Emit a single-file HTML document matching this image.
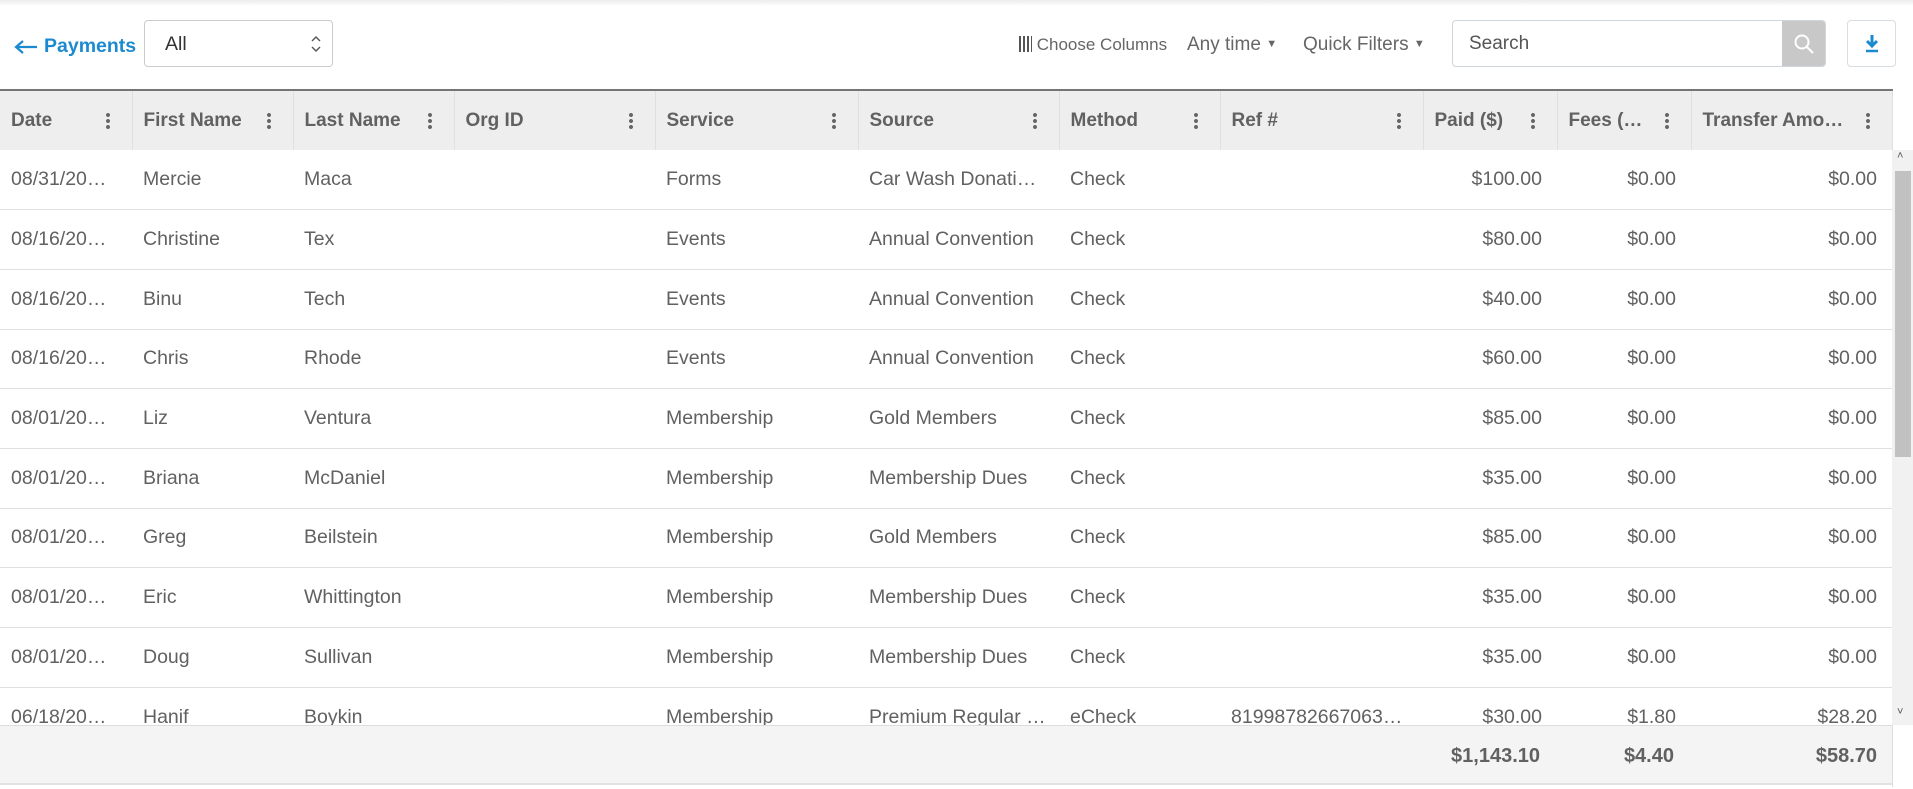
<!DOCTYPE html>
<html><head><meta charset="utf-8"><style>
*{box-sizing:border-box;margin:0;padding:0}
body{width:1913px;height:789px;overflow:hidden;background:#fff;font-family:"Liberation Sans",Arial,sans-serif;color:#616161;position:relative}
.topsh{position:absolute;left:0;top:0;width:1913px;height:6px;background:linear-gradient(#ececec,#fff)}
.abs{position:absolute}
.back{left:14px;top:35px;color:#1b8ad1;font-size:19.5px;font-weight:bold;display:flex;align-items:center;gap:6px}
.sel{left:144px;top:20px;width:189px;height:47px;border:1px solid #ccc;border-radius:4px;font-size:19.5px;color:#333;padding:12px 20px}
.tb{top:34px;font-size:19px;color:#666}
.search{left:1452px;top:20px;width:374px;height:47px;border:1px solid #cfd6de;border-radius:4px;overflow:hidden}
.search span{position:absolute;left:16px;top:12px;font-size:19px;color:#555}
.search .btn{position:absolute;right:0;top:0;width:43px;height:47px;background:#c8c8c8}
.dl{left:1847px;top:20px;width:49px;height:47px;border:1px solid #d8dde3;border-radius:4px}
table{position:absolute;left:0;top:89px;width:1892px;border-collapse:collapse;table-layout:fixed;font-size:19.5px}
thead tr{background:#eeeeee;height:60px;border-top:2px solid #757575}
th{text-align:left;font-weight:bold;color:#616161;padding:0 11px;border-right:1px solid #e0e0e0;position:relative;white-space:nowrap;font-size:19px}
th i{position:absolute;right:22px;top:21px;width:4px;height:18px;background:radial-gradient(circle,#666 1.8px,transparent 2.2px) 0 0/4px 6px repeat-y}
td{height:59.7px;border-bottom:1px solid #e0e0e0;padding:0 11px;white-space:nowrap;overflow:hidden;color:#616161}
td.r{text-align:right;padding-right:15px}
.foot{position:absolute;left:0;top:725px;width:1892px;height:60px;background:#f4f4f4;border-top:1px solid #ddd;border-bottom:2px solid #e2e2e2;font-weight:bold;font-size:20px;color:#616161}
.foot span{position:absolute;top:19px}
.sb{position:absolute;left:1892px;top:150px;width:21px;height:575px;background:#f1f1f1}
.thumb{position:absolute;left:1895px;top:171px;width:16px;height:286px;background:#c1c1c1}
</style></head><body>
<div class="topsh"></div>
<div class="abs back"><svg width="24" height="16" viewBox="0 0 24 16"><path d="M23 8H3M9 2L2 8l7 6" stroke="#1b8ad1" stroke-width="2.2" fill="none"/></svg>Payments</div>
<div class="abs sel">All<svg style="position:absolute;right:10px;top:13px" width="12" height="20" viewBox="0 0 12 20"><path d="M2 7l4-4 4 4M2 13l4 4 4-4" stroke="#555" stroke-width="1.4" fill="none"/></svg></div>
<div class="abs tb" style="left:1019px;font-size:17px;top:35px"><span style="display:inline-block;width:13px;height:16px;background:repeating-linear-gradient(90deg,#555 0 2px,transparent 2px 4px);vertical-align:-2px"></span> Choose Columns</div>
<div class="abs tb" style="left:1187px">Any time <span style="font-size:11px;vertical-align:3px">▼</span></div>
<div class="abs tb" style="left:1303px">Quick Filters <span style="font-size:11px;vertical-align:3px">▼</span></div>
<div class="abs search"><span>Search</span><div class="btn"><svg style="position:absolute;left:11px;top:12px" width="22" height="22" viewBox="0 0 22 22"><circle cx="9" cy="9" r="6.5" stroke="#fff" stroke-width="2" fill="none"/><path d="M14 14l6 6" stroke="#fff" stroke-width="2"/></svg></div></div>
<div class="abs dl"><svg style="position:absolute;left:16px;top:13px" width="16" height="20" viewBox="0 0 16 20"><path d="M8 1v10M3 7l5 5 5-5" stroke="#1b8ad1" stroke-width="3" fill="none"/><path d="M2 17h12" stroke="#1b8ad1" stroke-width="2.5"/></svg></div>
<table>
<colgroup><col style="width:132px"><col style="width:161px"><col style="width:161px"><col style="width:201px"><col style="width:203px"><col style="width:201px"><col style="width:161px"><col style="width:203px"><col style="width:134px"><col style="width:134px"><col style="width:201px"></colgroup>
<thead><tr><th>Date<i></i></th><th>First Name<i></i></th><th>Last Name<i></i></th><th>Org ID<i></i></th><th>Service<i></i></th><th>Source<i></i></th><th>Method<i></i></th><th>Ref #<i></i></th><th>Paid ($)<i></i></th><th>Fees (…<i></i></th><th>Transfer Amo…<i></i></th></tr></thead>
<tbody>
<tr><td>08/31/20…</td><td>Mercie</td><td>Maca</td><td></td><td>Forms</td><td>Car Wash Donati…</td><td>Check</td><td></td><td class="r">$100.00</td><td class="r">$0.00</td><td class="r">$0.00</td></tr>
<tr><td>08/16/20…</td><td>Christine</td><td>Tex</td><td></td><td>Events</td><td>Annual Convention</td><td>Check</td><td></td><td class="r">$80.00</td><td class="r">$0.00</td><td class="r">$0.00</td></tr>
<tr><td>08/16/20…</td><td>Binu</td><td>Tech</td><td></td><td>Events</td><td>Annual Convention</td><td>Check</td><td></td><td class="r">$40.00</td><td class="r">$0.00</td><td class="r">$0.00</td></tr>
<tr><td>08/16/20…</td><td>Chris</td><td>Rhode</td><td></td><td>Events</td><td>Annual Convention</td><td>Check</td><td></td><td class="r">$60.00</td><td class="r">$0.00</td><td class="r">$0.00</td></tr>
<tr><td>08/01/20…</td><td>Liz</td><td>Ventura</td><td></td><td>Membership</td><td>Gold Members</td><td>Check</td><td></td><td class="r">$85.00</td><td class="r">$0.00</td><td class="r">$0.00</td></tr>
<tr><td>08/01/20…</td><td>Briana</td><td>McDaniel</td><td></td><td>Membership</td><td>Membership Dues</td><td>Check</td><td></td><td class="r">$35.00</td><td class="r">$0.00</td><td class="r">$0.00</td></tr>
<tr><td>08/01/20…</td><td>Greg</td><td>Beilstein</td><td></td><td>Membership</td><td>Gold Members</td><td>Check</td><td></td><td class="r">$85.00</td><td class="r">$0.00</td><td class="r">$0.00</td></tr>
<tr><td>08/01/20…</td><td>Eric</td><td>Whittington</td><td></td><td>Membership</td><td>Membership Dues</td><td>Check</td><td></td><td class="r">$35.00</td><td class="r">$0.00</td><td class="r">$0.00</td></tr>
<tr><td>08/01/20…</td><td>Doug</td><td>Sullivan</td><td></td><td>Membership</td><td>Membership Dues</td><td>Check</td><td></td><td class="r">$35.00</td><td class="r">$0.00</td><td class="r">$0.00</td></tr>
<tr><td>06/18/20…</td><td>Hanif</td><td>Boykin</td><td></td><td>Membership</td><td>Premium Regular …</td><td>eCheck</td><td>81998782667063…</td><td class="r">$30.00</td><td class="r">$1.80</td><td class="r">$28.20</td></tr>
</tbody></table>
<div class="sb"></div><div class="thumb"></div>
<div class="abs" style="left:1897px;top:150px;font-size:11px;color:#555">˄</div>
<div class="abs" style="left:1897px;top:706px;font-size:11px;color:#555">˅</div>
<div class="foot"><span style="right:352px">$1,143.10</span><span style="right:218px">$4.40</span><span style="right:15px">$58.70</span></div>
<div class="abs" style="left:1892px;top:725px;width:21px;height:62px;background:#fff;border-left:1px solid #ddd"></div>
</body></html>
